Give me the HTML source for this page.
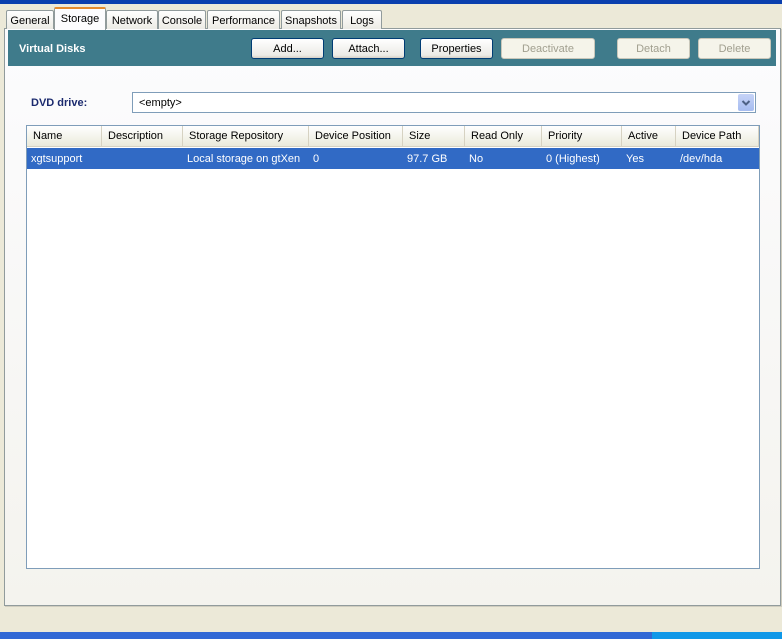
<!DOCTYPE html>
<html><head><style>
*{margin:0;padding:0;box-sizing:border-box}
body{width:782px;height:639px;background:#ece9d8;font-family:"Liberation Sans",sans-serif;font-size:11px;position:relative;overflow:hidden}
.abs{position:absolute}
.tab{position:absolute;top:10px;height:19px;border:1px solid #919b9c;border-bottom:none;background:linear-gradient(#fff,#ecebe5);padding:4px 0 0 0;text-align:center;color:#000;border-radius:2px 2px 0 0}
.btn{position:absolute;top:38px;height:21px;border:1px solid #003c74;border-radius:3px;background:linear-gradient(#fff,#ecebe6 85%,#d6d0c5);text-align:center;line-height:20px;color:#000}
.dis{border-color:#c9c7ba;background:#f5f4ea;color:#a19f8f}
.hc{position:absolute;top:0;height:20px;line-height:21px;padding-left:6px;border-right:1px solid #d6d2c2}
.rc{position:absolute;top:0;line-height:22px;padding-left:4px;color:#fff}
</style></head><body>
<div class="abs" style="left:0;top:0;width:782px;height:4px;background:#0a3fae"></div>
<div class="abs" style="left:4px;top:28px;width:777px;height:578px;border:1px solid #919b9c;background:linear-gradient(#fcfcfe,#f4f3ee);box-shadow:1px 1px 0 #d0cdbf"></div>
<div class="tab" style="left:6px;width:48px">General</div>
<div class="tab" style="left:106px;width:52px">Network</div>
<div class="tab" style="left:158px;width:48px">Console</div>
<div class="tab" style="left:207px;width:73px">Performance</div>
<div class="tab" style="left:281px;width:60px">Snapshots</div>
<div class="tab" style="left:342px;width:40px">Logs</div>
<div class="tab" style="left:54px;top:7px;height:23px;width:52px;background:#fcfcfe;border-top:2px solid #e68b2c;padding-top:4px">Storage</div>
<div class="abs" style="left:8px;top:30px;width:768px;height:36px;background:#3f7b8b"></div>
<div class="abs" style="left:19px;top:43px;color:#fff;font-weight:bold">Virtual Disks</div>
<div class="btn" style="left:251px;width:73px">Add...</div>
<div class="btn" style="left:332px;width:73px">Attach...</div>
<div class="btn" style="left:420px;width:73px">Properties</div>
<div class="btn dis" style="left:501px;width:94px">Deactivate</div>
<div class="btn dis" style="left:617px;width:73px">Detach</div>
<div class="btn dis" style="left:698px;width:73px">Delete</div>
<div class="abs" style="left:31px;top:97px;color:#1b2a6e;font-weight:bold">DVD drive:</div>
<div class="abs" style="left:132px;top:92px;width:624px;height:21px;border:1px solid #7f9db9;background:#fff;padding:4px 0 0 6px">&lt;empty&gt;</div>
<div class="abs" style="left:738px;top:94px;width:16px;height:17px;background:linear-gradient(#c6d3f7,#a6bcf0);border-radius:2px"><svg width="16" height="17"><path d="M4.5 7 L8 10.5 L11.5 7" fill="none" stroke="#4d6185" stroke-width="2"/></svg></div>
<div class="abs" style="left:26px;top:125px;width:734px;height:444px;border:1px solid #7f9db9;background:#fff">
 <div class="abs" style="left:0;top:0;width:732px;height:21px;background:linear-gradient(#fff,#ebeadb);border-bottom:1px solid #d6d2c2">
  <div class="hc" style="left:0;width:75px">Name</div>
  <div class="hc" style="left:75px;width:81px">Description</div>
  <div class="hc" style="left:156px;width:126px">Storage Repository</div>
  <div class="hc" style="left:282px;width:94px">Device Position</div>
  <div class="hc" style="left:376px;width:62px">Size</div>
  <div class="hc" style="left:438px;width:77px">Read Only</div>
  <div class="hc" style="left:515px;width:80px">Priority</div>
  <div class="hc" style="left:595px;width:54px">Active</div>
  <div class="hc" style="left:649px;width:83px">Device Path</div>
 </div>
 <div class="abs" style="left:0;top:22px;width:732px;height:21px;background:#316ac5">
  <div class="rc" style="left:0">xgtsupport</div>
  <div class="rc" style="left:156px">Local storage on gtXen</div>
  <div class="rc" style="left:282px">0</div>
  <div class="rc" style="left:376px">97.7 GB</div>
  <div class="rc" style="left:438px">No</div>
  <div class="rc" style="left:515px">0 (Highest)</div>
  <div class="rc" style="left:595px">Yes</div>
  <div class="rc" style="left:649px">/dev/hda</div>
 </div>
</div>
<div class="abs" style="left:0;top:632px;width:782px;height:7px;background:#3168d5"></div>
<div class="abs" style="left:652px;top:632px;width:130px;height:7px;background:#0f98e8"></div>
</body></html>
